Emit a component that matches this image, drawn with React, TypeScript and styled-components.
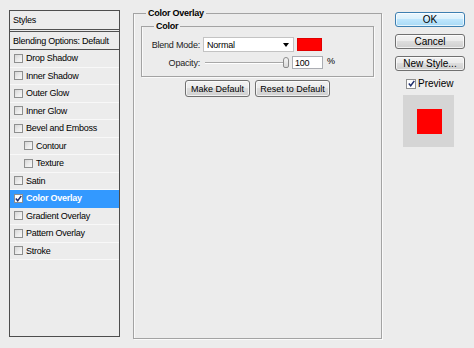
import React from 'react';
import styled, { createGlobalStyle } from 'styled-components';

const Global = createGlobalStyle`
  html, body { margin: 0; padding: 0; background: #ececec; }
  body {
    font-family: "Liberation Sans", Arial, sans-serif;
    font-size: 9px;
    color: #000;
    -webkit-font-smoothing: antialiased;
  }
  #root { width: 474px; height: 348px; }
`;

const Window = styled.div`
  width: 474px;
  height: 348px;
  box-sizing: border-box;
  background: #ececec;
  display: flex;
  align-items: flex-start;
  padding-left: 9px;
  overflow: hidden;
`;

/* ---------- left styles list ---------- */

const StylesList = styled.div`
  margin-top: 10px;
  width: 111px;
  height: 327px;
  box-sizing: border-box;
  border: 1px solid #4d4d4d;
  display: flex;
  flex-direction: column;
  letter-spacing: -0.25px;
`;

const ListHeader = styled.div`
  height: 21px;
  box-sizing: border-box;
  border-bottom: 3px double #505050;
  padding-left: 3px;
  display: flex;
  align-items: center;
`;

const BlendingRow = styled.div`
  height: 18px;
  box-sizing: border-box;
  border-bottom: 1px solid #505050;
  padding-left: 3px;
  display: flex;
  align-items: center;
`;

const StyleRow = styled.div<{ $indent?: boolean; $selected?: boolean }>`
  height: 17.5px;
  box-sizing: border-box;
  border-bottom: 1px solid ${(p) => (p.$selected ? '#3399ff' : '#f8f8f8')};
  padding-left: ${(p) => (p.$indent ? 14 : 4)}px;
  display: flex;
  align-items: center;
  gap: 3px;
  background: ${(p) => (p.$selected ? '#3399ff' : 'transparent')};
  color: ${(p) => (p.$selected ? '#fff' : '#000')};
  font-weight: ${(p) => (p.$selected ? 'bold' : 'normal')};
`;

const Box = styled.span<{ $checked?: boolean; $size?: number }>`
  width: ${(p) => p.$size ?? 9}px;
  height: ${(p) => p.$size ?? 9}px;
  box-sizing: border-box;
  flex: none;
  border: 1px solid #8e8f8f;
  background: ${(p) =>
    p.$checked
      ? '#fdfdfd'
      : 'linear-gradient(135deg, #d6d6d6 0%, #eeeeee 60%, #f7f7f7 100%)'};
  display: flex;
  align-items: center;
  justify-content: center;
`;

const CheckMark = () => (
  <svg width="7" height="7" viewBox="0 0 7 7">
    <path d="M0.8 3.6 L2.7 5.8 L6.3 0.9" fill="none" stroke="#1f2f6e" strokeWidth="1.5" />
  </svg>
);

const Checkbox = ({ checked, size }: { checked?: boolean; size?: number }) => (
  <Box $checked={checked} $size={size}>
    {checked && <CheckMark />}
  </Box>
);

/* ---------- central group boxes ---------- */

const Group = styled.fieldset`
  margin: 0;
  min-width: 0;
  box-sizing: border-box;
  border: 1px solid #a3a3a3;
  box-shadow: inset 1px 0 0 #fafafa, 1px 1px 0 #fafafa;
`;

const MainGroup = styled(Group)`
  margin: 7px 0 0 13px;
  width: 249px;
  height: 332px;
  padding: 1px 7px 0 7px;
  display: flex;
  flex-direction: column;
`;

const InnerGroup = styled(Group)`
  padding: 5px 7px 7px 0;
`;

const Legend = styled.legend<{ $offset: number }>`
  font-weight: bold;
  line-height: 12px;
  padding: 0 2px;
  margin-left: ${(p) => p.$offset}px;
  letter-spacing: -0.25px;
  background: #ececec;
`;

const FieldGrid = styled.div`
  display: grid;
  grid-template-columns: 58px auto;
  column-gap: 3px;
  row-gap: 4px;
  align-items: center;
  letter-spacing: -0.2px;
`;

const Label = styled.span`
  text-align: right;
  color: #222;
`;

const Controls = styled.div`
  display: flex;
  align-items: center;
`;

const Select = styled.div`
  width: 91px;
  height: 15px;
  box-sizing: border-box;
  background: #fff;
  border: 1px solid #c3c3c3;
  display: flex;
  align-items: center;
  justify-content: space-between;
  padding: 0 4px 0 3px;
`;

const Arrow = styled.span`
  width: 0;
  height: 0;
  border-left: 3px solid transparent;
  border-right: 3px solid transparent;
  border-top: 4px solid #000;
`;

const Swatch = styled.span`
  margin-left: 3px;
  width: 25px;
  height: 13px;
  background: #ff0000;
  box-sizing: border-box;
  border: 1px solid #e00000;
`;

const SliderTrack = styled.div`
  position: relative;
  margin-left: 2px;
  width: 84px;
  height: 12px;
  display: flex;
  align-items: center;
`;

const TrackLine = styled.span`
  width: 80px;
  height: 1px;
  background: #a8a8a8;
  border-bottom: 1px solid #fff;
`;

const Thumb = styled.span`
  position: absolute;
  right: 0;
  top: 0;
  width: 6px;
  height: 11px;
  box-sizing: border-box;
  border: 1px solid #8c8c8c;
  border-radius: 3px 3px 2px 2px;
  background: linear-gradient(#f6f6f6, #d9d9d9);
`;

const NumInput = styled.div`
  margin-left: 3px;
  width: 31px;
  height: 13px;
  box-sizing: border-box;
  background: #fff;
  border: 1px solid #abadb3;
  padding-left: 2px;
  display: flex;
  align-items: center;
`;

const Percent = styled.span`
  margin-left: 4px;
  margin-top: -3px;
`;

const ButtonRow = styled.div`
  margin-top: 3px;
  display: flex;
  justify-content: center;
  gap: 5px;
`;

const Button = styled.button<{ $w: number; $h?: number; $primary?: boolean; $fs?: number }>`
  width: ${(p) => p.$w}px;
  height: ${(p) => p.$h ?? 17}px;
  box-sizing: border-box;
  padding: 0;
  margin: 0;
  font-family: "Liberation Sans", Arial, sans-serif;
  font-size: ${(p) => p.$fs ?? 9}px;
  color: #000;
  border-radius: 3px;
  border: 1px solid ${(p) => (p.$primary ? '#3c7fb1' : '#707070')};
  background: ${(p) =>
    p.$primary
      ? 'linear-gradient(#eaf6fd 0%, #d9f0fc 50%, #bee6fd 50%, #a7d9f5 100%)'
      : 'linear-gradient(#f2f2f2 0%, #ebebeb 50%, #dddddd 50%, #cfcfcf 100%)'};
  box-shadow: inset 0 0 0 1px rgba(255, 255, 255, 0.7);
  display: flex;
  align-items: center;
  justify-content: center;
`;

/* ---------- right column ---------- */

const RightColumn = styled.div`
  margin: 12px 0 0 13px;
  width: 70px;
  display: flex;
  flex-direction: column;
  gap: 7px;
`;

const PreviewRow = styled.label`
  margin-left: 11px;
  display: flex;
  align-items: center;
  gap: 2px;
  font-size: 10px;
`;

const PreviewBox = styled.div`
  margin: -1px 0 0 8px;
  width: 51px;
  height: 52px;
  background: #d5d5d5;
  display: flex;
  align-items: center;
  justify-content: center;
`;

const PreviewSquare = styled.span`
  width: 25px;
  height: 25px;
  background: #ff0000;
  margin-left: 1px;
`;

const styleItems: { name: string; indent?: boolean; checked?: boolean }[] = [
  { name: 'Drop Shadow' },
  { name: 'Inner Shadow' },
  { name: 'Outer Glow' },
  { name: 'Inner Glow' },
  { name: 'Bevel and Emboss' },
  { name: 'Contour', indent: true },
  { name: 'Texture', indent: true },
  { name: 'Satin' },
  { name: 'Color Overlay', checked: true },
  { name: 'Gradient Overlay' },
  { name: 'Pattern Overlay' },
  { name: 'Stroke' },
];

export default function App() {
  return (
    <>
      <Global />
      <Window>
        <StylesList>
          <ListHeader>Styles</ListHeader>
          <BlendingRow>Blending Options: Default</BlendingRow>
          {styleItems.map((it) => (
            <StyleRow key={it.name} $indent={it.indent} $selected={it.checked}>
              <Checkbox checked={it.checked} />
              <span>{it.name}</span>
            </StyleRow>
          ))}
        </StylesList>

        <MainGroup>
          <Legend $offset={5}>Color Overlay</Legend>
          <InnerGroup>
            <Legend $offset={12}>Color</Legend>
            <FieldGrid>
              <Label>Blend Mode:</Label>
              <Controls>
                <Select>
                  <span>Normal</span>
                  <Arrow />
                </Select>
                <Swatch />
              </Controls>
              <Label>Opacity:</Label>
              <Controls>
                <SliderTrack>
                  <TrackLine />
                  <Thumb />
                </SliderTrack>
                <NumInput>100</NumInput>
                <Percent>%</Percent>
              </Controls>
            </FieldGrid>
          </InnerGroup>
          <ButtonRow>
            <Button $w={65}>Make Default</Button>
            <Button $w={75}>Reset to Default</Button>
          </ButtonRow>
        </MainGroup>

        <RightColumn>
          <Button $w={70} $h={15} $fs={10} $primary>OK</Button>
          <Button $w={70} $h={15} $fs={10}>Cancel</Button>
          <Button $w={70} $h={15} $fs={10}>New Style...</Button>
          <PreviewRow>
            <Checkbox checked size={10} />
            <span>Preview</span>
          </PreviewRow>
          <PreviewBox>
            <PreviewSquare />
          </PreviewBox>
        </RightColumn>
      </Window>
    </>
  );
}
